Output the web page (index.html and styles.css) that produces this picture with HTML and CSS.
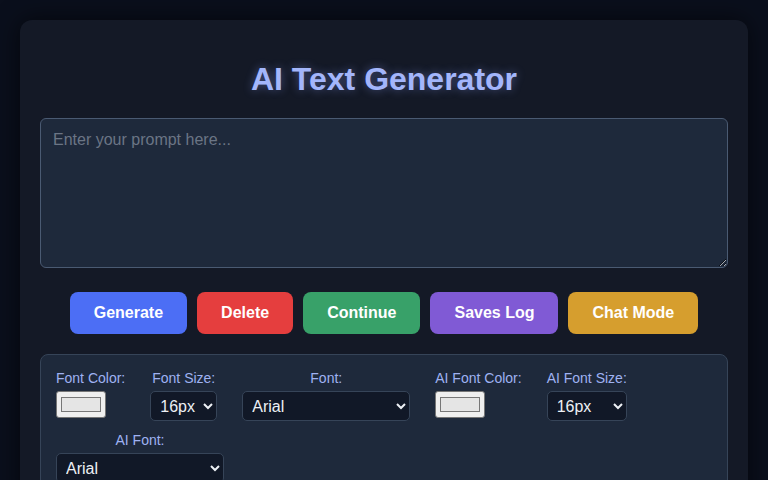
FILE: index.html
```html
<!DOCTYPE html>
<html lang="en">
<head>
    <meta charset="UTF-8">
    <meta name="viewport" content="width=device-width, initial-scale=1.0">
    <title>AI Text Generator</title>
    <link rel="stylesheet" href="styles.css">
</head>
<body>
    <div class="container">
        <h1>AI Text Generator</h1>
        <textarea id="prompt" placeholder="Enter your prompt here..."></textarea>

        <div class="buttons">
            <button class="btn-generate">Generate</button>
            <button class="btn-delete">Delete</button>
            <button class="btn-continue">Continue</button>
            <button class="btn-log">Saves Log</button>
            <button class="btn-chat">Chat Mode</button>
        </div>

        <div class="settings">
            <div class="setting">
                <label for="fontColor">Font Color:</label>
                <input type="color" id="fontColor" value="#e5e5e5">
            </div>
            <div class="setting">
                <label for="fontSize">Font Size:</label>
                <select id="fontSize" class="size-select">
                    <option>12px</option>
                    <option>14px</option>
                    <option selected>16px</option>
                    <option>18px</option>
                    <option>20px</option>
                </select>
            </div>
            <div class="setting">
                <label for="fontFamily">Font:</label>
                <select id="fontFamily" class="font-select">
                    <option selected>Arial</option>
                    <option>Times New Roman</option>
                    <option>Courier New</option>
                    <option>Georgia</option>
                    <option>Verdana</option>
                </select>
            </div>
            <div class="setting">
                <label for="aiFontColor">AI Font Color:</label>
                <input type="color" id="aiFontColor" value="#e5e5e5">
            </div>
            <div class="setting">
                <label for="aiFontSize">AI Font Size:</label>
                <select id="aiFontSize" class="ai-size-select">
                    <option>12px</option>
                    <option>14px</option>
                    <option selected>16px</option>
                    <option>18px</option>
                    <option>20px</option>
                </select>
            </div>
            <div class="setting">
                <label for="aiFontFamily">AI Font:</label>
                <select id="aiFontFamily" class="font-select">
                    <option selected>Arial</option>
                    <option>Times New Roman</option>
                    <option>Courier New</option>
                    <option>Georgia</option>
                    <option>Verdana</option>
                </select>
            </div>
        </div>
    </div>
</body>
</html>
```

FILE: styles.css
```css
body {
    font-family: "Liberation Sans", Arial, sans-serif;
    margin: 0;
    padding: 20px;
    background-color: #0a0f1c;
    color: #e2e8f0;
}
.container {
    background: #141926;
    padding: 20px;
    border-radius: 12px;
    box-shadow: 0 0 25px rgba(0, 0, 0, 0.6);
}
h1 {
    text-align: center;
    font-size: 32px;
    margin: 21px 0 20px;
    color: #a3b6fb;
    text-shadow: 0 0 10px rgba(140, 160, 250, 0.45);
}
textarea {
    display: block;
    width: 100%;
    height: 150px;
    box-sizing: border-box;
    padding: 12px;
    font-family: inherit;
    font-size: 16px;
    color: #e2e8f0;
    background-color: #1e293b;
    border: 1px solid #4a5a72;
    border-radius: 6px;
    resize: vertical;
}
textarea::placeholder {
    color: #6b7585;
}
.buttons {
    display: flex;
    justify-content: center;
    gap: 10px;
    margin: 24px 0 20px;
}
button {
    padding: 12px 24px;
    border: none;
    border-radius: 8px;
    color: white;
    font-family: inherit;
    font-size: 16px;
    font-weight: bold;
    cursor: pointer;
}
.btn-generate { background-color: #4c6ef5; }
.btn-delete { background-color: #e53e3e; }
.btn-continue { background-color: #38a169; }
.btn-log { background-color: #805ad5; }
.btn-chat { background-color: #d69e2e; }
.settings {
    display: flex;
    flex-wrap: wrap;
    align-items: flex-start;
    align-content: flex-start;
    gap: 11px 25px;
    padding: 15px;
    background-color: #1e293b;
    border: 1px solid #364458;
    border-radius: 8px;
}
.setting {
    display: flex;
    flex-direction: column;
}
.setting label {
    text-align: center;
    font-size: 14px;
    color: #9fb2f2;
    margin-bottom: 5px;
}
input[type="color"] {
    width: 50px;
    height: 27px;
    padding: 1px 2px;
    background-color: #efefef;
    border: 1px solid #767676;
    border-radius: 3px;
}
select {
    height: 30px;
    padding: 4px 2px 4px 5px;
    font-family: inherit;
    font-size: 16px;
    color: #edf0f5;
    background-color: #111827;
    border: 1px solid #364458;
    border-radius: 5px;
}
.size-select { width: 67px; }
.ai-size-select { width: 80px; }
.font-select { width: 168px; }
```
